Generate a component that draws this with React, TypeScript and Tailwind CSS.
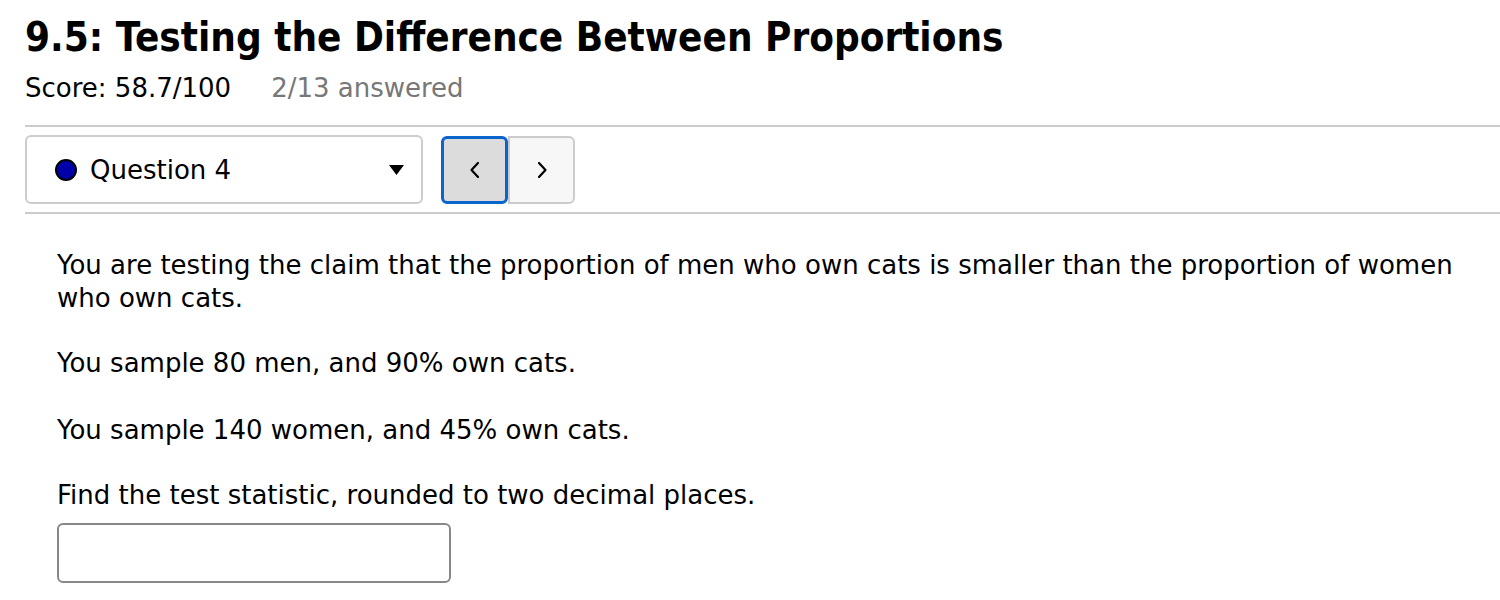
const Chevron = ({ dir }: { dir: "left" | "right" }) => (
  <svg width="14" height="20" viewBox="0 0 14 20" fill="none">
    <polyline
      points={dir === "left" ? "10,3 3.5,10 10,17" : "4,3 10.5,10 4,17"}
      stroke="#000"
      strokeWidth="2.2"
      strokeLinecap="round"
      strokeLinejoin="round"
    />
  </svg>
);

const App = () => {
  return (
    <div className="min-h-[600px] bg-white font-['DejaVu_Sans',sans-serif] text-black">
      {/* header */}
      <div className="pl-[25px]">
        <h1 className="pt-[13px] font-['DejaVu_Sans_Condensed','Open_Sans',sans-serif] text-[40px] leading-[48px] font-bold">
          9.5: Testing the Difference Between Proportions
        </h1>
        <div className="mt-[11px] flex gap-[40px] text-[26px] leading-[32px]">
          <span>Score: 58.7/100</span>
          <span className="text-[#777]">2/13 answered</span>
        </div>

        <div className="mt-[21px] h-[2px] bg-[#ccc]" />

        {/* question nav */}
        <div className="mt-[8px] flex items-center">
          <div className="flex h-[69px] w-[398px] items-center rounded-[6px] border-2 border-[#ccc] pl-[28px] pr-[17px]">
            <span className="h-[22px] w-[22px] rounded-full border-2 border-black bg-[#0000a8]" />
            <span className="ml-[13px] flex-1 text-[26px] leading-[32px]">Question 4</span>
            <svg width="15" height="10" viewBox="0 0 15 10">
              <polygon points="0,0 15,0 7.5,10" fill="#000" />
            </svg>
          </div>
          <button className="ml-[18px] flex h-[68px] w-[67px] items-center justify-center rounded-[6px] border-[3px] border-[#0a64cc] bg-[#dcdcdc]">
            <Chevron dir="left" />
          </button>
          <button className="flex h-[68px] w-[67px] items-center justify-center rounded-r-[6px] border-2 border-[#ccc] bg-[#f7f7f7]">
            <Chevron dir="right" />
          </button>
        </div>

        <div className="mt-[8px] h-[2px] bg-[#ccc]" />
      </div>

      {/* question body */}
      <div className="pl-[57px] pr-[25px] pt-[35px] text-[26px] leading-[33px]">
        <p>
          You are testing the claim that the proportion of men who own cats is smaller than the proportion of women who own cats.
        </p>
        <p className="mt-[32px]">You sample 80 men, and 90% own cats.</p>
        <p className="mt-[34px]">You sample 140 women, and 45% own cats.</p>
        <p className="mt-[32px]">Find the test statistic, rounded to two decimal places.</p>
        <input
          type="text"
          className="mt-[11px] h-[60px] w-[394px] rounded-[6px] border-2 border-[#888] px-3 outline-none"
        />
      </div>
    </div>
  );
};

export default App;
